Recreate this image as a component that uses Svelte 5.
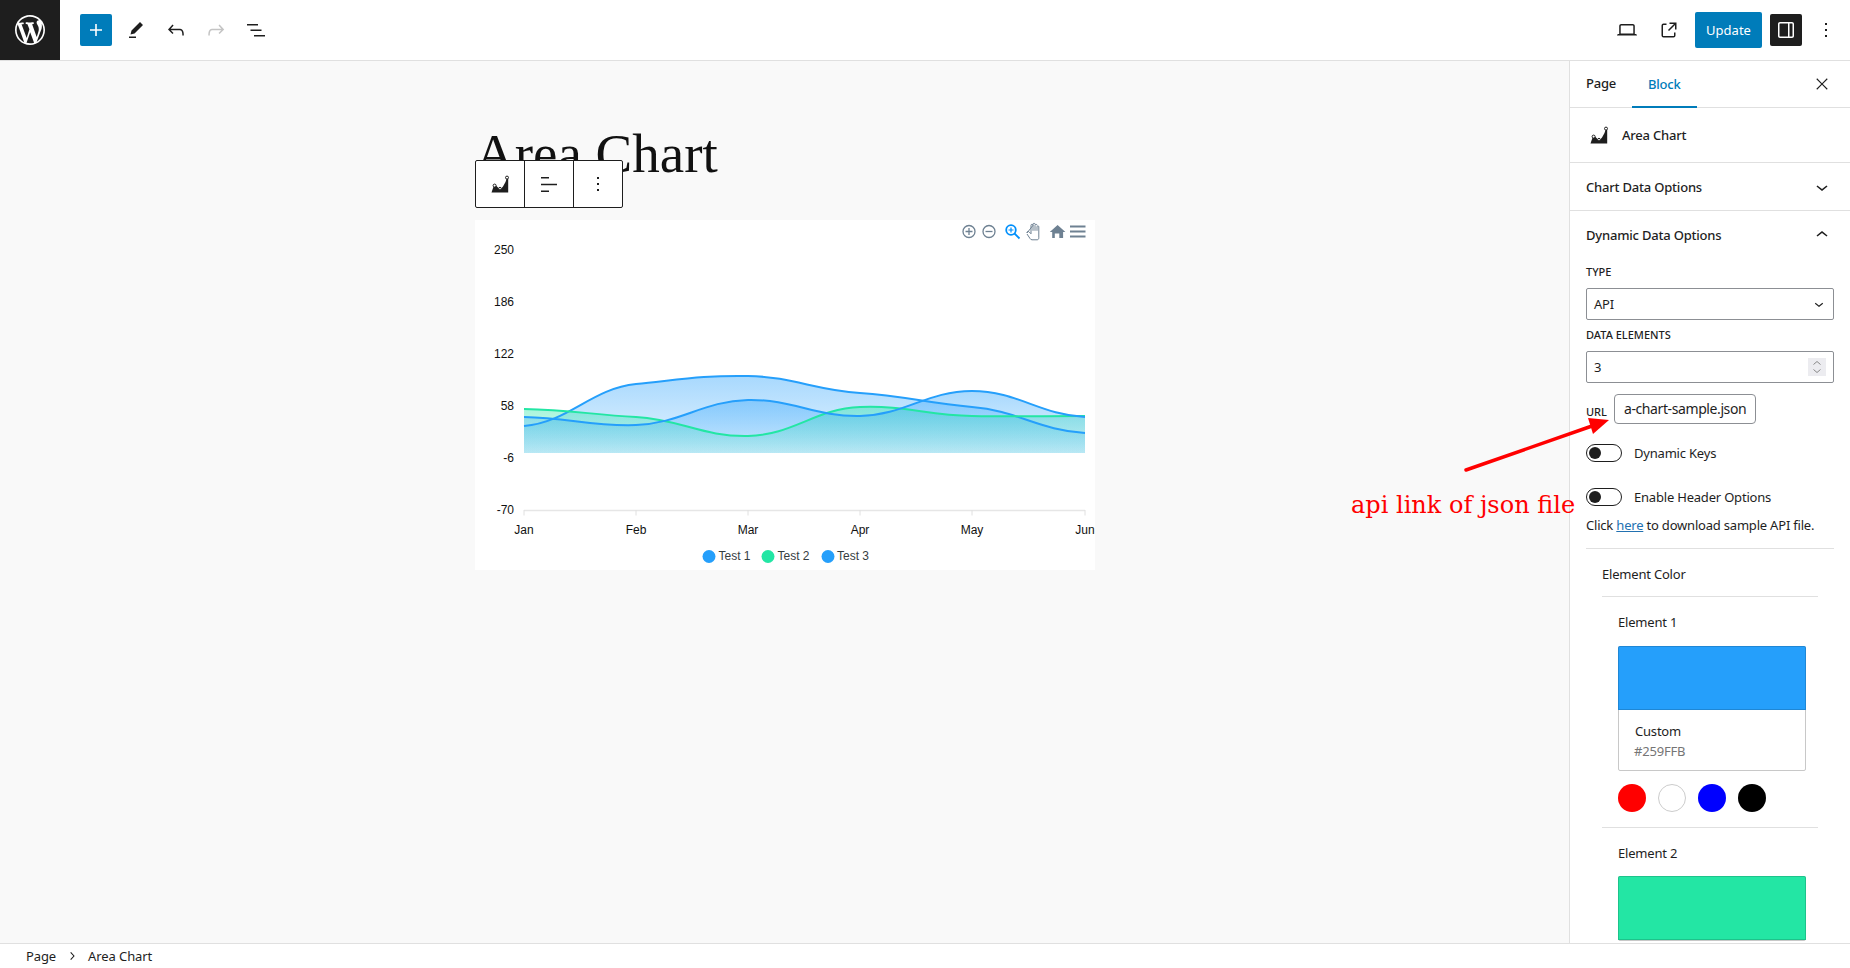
<script>
  const ticks = [524, 636, 748, 860, 972, 1085];
  const months = ['Jan', 'Feb', 'Mar', 'Apr', 'May', 'Jun'];
  const yLabels = [['250', 250], ['186', 302], ['122', 354], ['58', 406], ['-6', 458], ['-70', 510]];
  const baseY = 453;

  const series = [
    { id: 's1', color: '#259FFB', ys: [426, 384, 376, 393, 407, 433] },
    { id: 's2', color: '#23E6A4', ys: [409, 417, 436, 407, 416, 416] },
    { id: 's3', color: '#259FFB', ys: [417, 425, 400, 416, 391, 417] }
  ];

  // catmull-rom through the points, close enough to the chart lib's smoothing
  function linePath(ys) {
    let d = `M${ticks[0]} ${ys[0]}`;
    for (let i = 0; i < ys.length - 1; i++) {
      const prev = ys[Math.max(i - 1, 0)];
      const next = ys[Math.min(i + 2, ys.length - 1)];
      const dx = (ticks[i + 1] - ticks[i]) * 0.4;
      const c1 = ys[i] + (ys[i + 1] - prev) * 0.09;
      const c2 = ys[i + 1] - (next - ys[i]) * 0.09;
      d += ` C${ticks[i] + dx} ${c1} ${ticks[i + 1] - dx} ${c2} ${ticks[i + 1]} ${ys[i + 1]}`;
    }
    return d;
  }
  const areaPath = (ys) => `${linePath(ys)} L1085 ${baseY} L524 ${baseY} Z`;

  const legend = [
    { label: 'Test 1', color: '#259FFB', cx: 709, tx: 718.5 },
    { label: 'Test 2', color: '#23E6A4', cx: 768, tx: 777.5 },
    { label: 'Test 3', color: '#259FFB', cx: 828, tx: 837 }
  ];
  const presets = ['#ff0000', '#ffffff', '#0000ff', '#000000'];

  const areaIcon = 'M3.5 20.5 5.2 15.5 6.5 13.5 8.5 14 11 16.5 13 16.8 15 14.5 17.5 10 18.5 7 20.2 7V20.5Z';
</script>

{#snippet areaGlyph()}
  <svg class="icon" viewBox="0 0 24 24" width="24" height="24">
    <path d={areaIcon} fill="#1e1e1e" />
    <circle cx="6.6" cy="13.6" r="1.5" fill="#fff" stroke="#1e1e1e" />
    <circle cx="12" cy="16.6" r="1.3" fill="#fff" stroke="#1e1e1e" />
    <circle cx="19" cy="5.6" r="1.5" fill="#fff" stroke="#1e1e1e" />
  </svg>
{/snippet}

{#snippet chevron(d)}
  <svg class="icon" viewBox="0 0 24 24" width="24" height="24"><path {d} /></svg>
{/snippet}

<div class="app">
  <header class="topbar">
    <a class="wp-logo" href="#top" aria-label="WordPress">
      <svg viewBox="0 0 20 20" width="30" height="30" fill="#fff">
        <path d="M20 10c0-5.51-4.49-10-10-10C4.48 0 0 4.49 0 10c0 5.52 4.48 10 10 10 5.51 0 10-4.48 10-10zM7.78 15.37L4.37 6.22c.55-.02 1.17-.08 1.17-.08.5-.06.44-1.13-.06-1.11 0 0-1.45.11-2.37.11-.18 0-.37 0-.58-.01C4.12 2.69 6.87 1.11 10 1.11c2.33 0 4.45.87 6.05 2.34-.68-.11-1.65.39-1.65 1.58 0 .74.45 1.36.9 2.1.35.61.55 1.36.55 2.46 0 1.49-1.4 5-1.4 5l-3.03-8.37c.54-.02.82-.17.82-.17.5-.05.44-1.25-.06-1.22 0 0-1.44.12-2.38.12-.87 0-2.33-.12-2.33-.12-.5-.03-.56 1.2-.06 1.22l.92.08 1.26 3.41zM17.41 10c.24-.64.74-1.87.43-4.25.7 1.29 1.05 2.71 1.05 4.25 0 3.29-1.73 6.24-4.4 7.78.97-2.59 1.94-5.2 2.92-7.78zM6.1 18.09C3.12 16.65 1.11 13.53 1.11 10c0-1.3.23-2.48.72-3.59C3.25 10.3 4.67 14.2 6.1 18.09zm4.03-6.63l2.58 6.98c-.86.29-1.76.45-2.71.45-.79 0-1.57-.11-2.29-.33.81-2.38 1.62-4.74 2.42-7.1z" />
      </svg>
    </a>
    <div class="tools-left">
      <button class="tool primary" aria-label="Add block">
        <svg class="icon white" viewBox="0 0 24 24" width="24" height="24"><path d="M18 11.2h-5.2V6h-1.6v5.2H6v1.6h5.2V18h1.6v-5.2H18z" /></svg>
      </button>
      <button class="tool" aria-label="Tools">
        <svg class="icon" viewBox="0 0 24 24" width="24" height="24"><path d="m19 7-3-3-8.5 8.5-1 4 4-1L19 7Zm-7 11.5H5V20h7v-1.5Z" /></svg>
      </button>
      <button class="tool" aria-label="Undo">
        <svg class="icon" viewBox="0 0 24 24" width="24" height="24"><path d="M18.3 11.7c-.6-.6-1.4-.9-2.3-.9H6.7l2.9-3.3-1.1-1-4.5 5L8.5 16l1-1-2.7-2.7H16c.5 0 .9.2 1.3.5 1 1 1 3.4 1 4.5v.3h1.5v-.2c0-1.5 0-4.3-1.5-5.7z" /></svg>
      </button>
      <button class="tool" aria-label="Redo">
        <svg class="icon muted" viewBox="0 0 24 24" width="24" height="24"><path d="M15.6 6.5l-1.1 1 2.9 3.3H8c-.9 0-1.7.3-2.3.9-1.4 1.5-1.4 4.2-1.4 5.6v.2h1.5v-.3c0-1.1 0-3.5 1-4.5.3-.3.7-.5 1.3-.5h9.2L14.5 15l1.1 1.1 4.6-4.6-4.6-5z" /></svg>
      </button>
      <button class="tool" aria-label="List view">
        <svg class="icon" viewBox="0 0 24 24" width="24" height="24"><path d="M3 6h11v1.5H3V6Zm3.5 5.5h11V13h-11v-1.5ZM21 17H10v1.5h11V17Z" /></svg>
      </button>
    </div>
    <div class="tools-right">
      <button class="tool" aria-label="View">
        <svg class="icon" viewBox="0 0 24 24" width="24" height="24"><path d="M20.5 16h-.7V8c0-1.1-.9-2-2-2H6.2c-1.1 0-2 .9-2 2v8h-.7c-.8 0-1.5.7-1.5 1.5h20c0-.8-.7-1.5-1.5-1.5zM5.7 8c0-.3.2-.5.5-.5h11.6c.3 0 .5.2.5.5v7.6H5.7V8z" /></svg>
      </button>
      <button class="tool" aria-label="View page">
        <svg class="icon" viewBox="0 0 24 24" width="24" height="24"><path d="M19.5 4.5h-7V6h4.44l-5.97 5.97 1.06 1.06L18 7.06v4.44h1.5v-7Zm-13 1a2 2 0 0 0-2 2v10a2 2 0 0 0 2 2h10a2 2 0 0 0 2-2v-3H17v3a.5.5 0 0 1-.5.5h-10a.5.5 0 0 1-.5-.5v-10a.5.5 0 0 1 .5-.5h3V5.5h-3Z" /></svg>
      </button>
      <button class="update">Update</button>
      <button class="tool dark" aria-label="Settings">
        <svg class="icon white" viewBox="0 0 24 24" width="24" height="24"><path d="M18 4H6c-1.1 0-2 .9-2 2v12c0 1.1.9 2 2 2h12c1.1 0 2-.9 2-2V6c0-1.1-.9-2-2-2zm-4 14.5H6c-.3 0-.5-.2-.5-.5V6c0-.3.2-.5.5-.5h8v13zm4.5-.5c0 .3-.2.5-.5.5h-2.5v-13H18c.3 0 .5.2.5.5v12z" /></svg>
      </button>
      <button class="tool narrow" aria-label="Options">
        <svg class="icon" viewBox="0 0 24 24" width="24" height="24"><path d="M13 19h-2v-2h2v2zm0-6h-2v-2h2v2zm0-6h-2V5h2v2z" /></svg>
      </button>
    </div>
  </header>

  <div class="workspace">
    <main class="canvas">
      <h1 class="post-title">Area Chart</h1>

      <div class="block-toolbar">
        <button class="tb-cell" aria-label="Area Chart">{@render areaGlyph()}</button>
        <button class="tb-cell" aria-label="Align">
          <svg class="icon" viewBox="0 0 24 24" width="24" height="24"><path d="M4 5h8v1.500H4V5Zm0 6.700h16v1.500H4v-1.500Zm0 6.800h8V20H4v-1.500Z" /></svg>
        </button>
        <button class="tb-cell" aria-label="Options">
          <svg class="icon" viewBox="0 0 24 24" width="24" height="24"><path d="M13 19h-2v-2h2v2zm0-6h-2v-2h2v2zm0-6h-2V5h2v2z" /></svg>
        </button>
      </div>

      <div class="chart">
        <svg viewBox="475 220 620 350" width="620" height="350">
          <defs>
            {#each series as s}
              <linearGradient id={s.id} x1="0" y1="0" x2="0" y2="1">
                <stop offset="0" stop-color={s.color} stop-opacity="0.4" />
                <stop offset="1" stop-color={s.color} stop-opacity="0.12" />
              </linearGradient>
            {/each}
          </defs>

          {#each yLabels as [label, y]}
            <text class="axis" x="514" y={y + 4} text-anchor="end">{label}</text>
          {/each}

          <path d="M524 510.5H1085" stroke="#e6e6e6" stroke-width="1.5" fill="none" />
          {#each ticks as x, i}
            <path d="M{x} 510V515.5" stroke="#e0e0e0" fill="none" />
            <text class="axis" {x} y="534" text-anchor="middle">{months[i]}</text>
          {/each}

          {#each series as s}
            <path d={areaPath(s.ys)} fill="url(#{s.id})" />
          {/each}
          {#each series as s}
            <path d={linePath(s.ys)} fill="none" stroke={s.color} stroke-width="2" />
          {/each}

          {#each legend as l}
            <circle cx={l.cx} cy="556.5" r="6.5" fill={l.color} />
            <text class="legend" x={l.tx} y="560">{l.label}</text>
          {/each}

          <g class="zoom-tools" fill="none" stroke="#6e8192" stroke-width="1.3">
            <circle cx="969" cy="231.5" r="6" />
            <path d="M969 228v7M965.5 231.5h7" />
            <circle cx="989" cy="231.5" r="6" />
            <path d="M985.5 231.5h7" />
            <g stroke="#008ffb" stroke-width="1.8">
              <circle cx="1011" cy="230" r="4.8" />
              <path d="M1014.5 233.5l5 5" />
              <path d="M1011 227.5v5M1008.5 230h5" stroke-width="1.2" />
            </g>
            <path d="M1027 234l3 4.500c.6.8 1 1.300 2 1.300h5c1.200 0 1.800-.8 1.800-2v-11c0-1.300-1.800-1.300-1.800 0v4m0-5.500c0-1.400-2-1.400-2 0v5.500m0-6.500c0-1.400-2-1.400-2 0v6.500m0-5.500c0-1.400-2-1.400-2 0v8.500l-2-2c-1-1-2.500 0-2 1.200Z" stroke-width="1" />
            <path d="M1054.8 238v-4.500h4.500v4.500h3.800v-6h2.300l-7.800-7-7.800 7h2.400v6z" fill="#6e8192" stroke="none" />
            <path d="M1070 226.500h15.500M1070 231.500h15.500M1070 236.500h15.500" stroke-width="2" />
          </g>
        </svg>
      </div>
    </main>

    <aside class="sidebar">
      <div class="tabs">
        <span class="tab">Page</span>
        <span class="tab active">Block</span>
        <button class="close" aria-label="Close">
          <svg class="icon" viewBox="0 0 24 24" width="18" height="18"><path d="m13.06 12 6.47-6.47-1.06-1.06L12 10.94 5.53 4.47 4.47 5.53 10.94 12l-6.47 6.47 1.06 1.06L12 13.06l6.47 6.47 1.06-1.06L13.06 12Z" /></svg>
        </button>
      </div>

      <div class="block-card">
        {@render areaGlyph()}
        <span>Area Chart</span>
      </div>

      <div class="panel-head">
        <span>Chart Data Options</span>
        {@render chevron('M17.500 11.600L12 16l-5.500-4.400.9-1.200L12 14l4.500-3.600 1 1.200z')}
      </div>

      <div class="panel">
        <div class="panel-head open">
          <span>Dynamic Data Options</span>
          {@render chevron('M6.500 12.400L12 8l5.500 4.400-.9 1.200L12 10l-4.500 3.600-1-1.200z')}
        </div>

        <div class="field-label first">TYPE</div>
        <div class="control">
          <span>API</span>
          <svg class="select-arrow" viewBox="0 0 24 24" width="18" height="18"><path d="M17.500 11.600L12 16l-5.500-4.400.9-1.200L12 14l4.500-3.600 1 1.200z" /></svg>
        </div>

        <div class="field-label">DATA ELEMENTS</div>
        <div class="control">
          <span>3</span>
          <div class="spin">
            <svg viewBox="0 0 18 18" width="18" height="18" fill="none" stroke="#888" stroke-width="1"><path d="M5.500 6.500 9 3.500l3.500 3M5.500 11.500l3.500 3 3.500-3" /></svg>
          </div>
        </div>

        <div class="url-row">
          <span class="url-label">URL</span>
          <div class="url-input">a-chart-sample.json</div>
        </div>

        <div class="toggle-row">
          <span class="toggle"><span class="knob"></span></span>
          <span>Dynamic Keys</span>
        </div>
        <div class="toggle-row second">
          <span class="toggle"><span class="knob"></span></span>
          <span>Enable Header Options</span>
        </div>

        <p class="hint">Click <a href="#top">here</a> to download sample API file.</p>

        <div class="colors">
          <div class="colors-title">Element Color</div>
          <div class="element">
            <div class="element-name">Element 1</div>
            <div class="swatch-card">
              <div class="swatch" style="background: #259FFB"></div>
              <div class="swatch-info">
                <div class="swatch-name">Custom</div>
                <div class="swatch-hex">#259FFB</div>
              </div>
            </div>
            <div class="presets">
              {#each presets as c}
                <span class="preset" class:blank={c === '#ffffff'} style="background: {c}"></span>
              {/each}
            </div>
          </div>
          <div class="element">
            <div class="element-name">Element 2</div>
            <div class="swatch-card">
              <div class="swatch" style="background: #23E6A4"></div>
            </div>
          </div>
        </div>
      </div>
    </aside>
  </div>

  <footer class="crumbs">
    <span>Page</span>
    <svg class="icon" viewBox="0 0 24 24" width="16" height="16"><path d="M10.600 6L9.400 7l4.600 5-4.600 5 1.200 1 5.400-6z" /></svg>
    <span>Area Chart</span>
  </footer>

  <!-- screenshot annotation drawn on top of the editor -->
  <svg class="arrow" viewBox="0 0 160 60" width="160" height="60">
    <path d="M6 55 L132 11" stroke="#ff0000" stroke-width="3.500" stroke-linecap="round" fill="none" />
    <path d="M128 3 L149 5 L133 19 Z" fill="#ff0000" />
  </svg>
  <div class="note">api link of json file</div>
</div>

<style>
  :global(body) {
    margin: 0;
    background: #fff;
    color: #1e1e1e;
    font-family: 'Noto Sans', sans-serif;
    font-size: 13px;
  }

  .app {
    position: relative;
    display: flex;
    flex-direction: column;
    height: 968px;
    width: 1850px;
    overflow: hidden;
  }

  button {
    border: 0;
    background: none;
    padding: 0;
    font: inherit;
    color: inherit;
  }

  .icon { display: block; fill: #1e1e1e; flex: none; }
  .icon.white { fill: #fff; }
  .icon.muted { fill: #c4c4c4; }

  /* top bar */
  .topbar {
    display: flex;
    align-items: center;
    height: 61px;
    box-sizing: border-box;
    flex: none;
    border-bottom: 1px solid #e0e0e0;
    background: #fff;
  }
  .wp-logo {
    width: 60px;
    height: 60px;
    background: #1e1e1e;
    display: flex;
    align-items: center;
    justify-content: center;
  }
  .tools-left {
    display: flex;
    align-items: center;
    gap: 8px;
    margin-left: 20px;
  }
  .tools-right {
    display: flex;
    align-items: center;
    margin-left: auto;
    padding-right: 8px;
  }
  .tool {
    width: 32px;
    height: 32px;
    border-radius: 2px;
    display: flex;
    align-items: center;
    justify-content: center;
  }
  .tools-right .tool { margin-left: 10px; }
  .tools-right .tool:first-child { margin-left: 0; }
  .tool.primary { background: #007cba; }
  .tools-right .tool.dark { background: #1e1e1e; margin-left: 8px; }
  .tools-right .tool.narrow { margin-left: 8px; }
  .update {
    width: 67px;
    height: 36px;
    margin-left: 10px;
    background: #007cba;
    color: #fff;
    border-radius: 2px;
    font-size: 13px;
  }

  /* editor area */
  .workspace {
    flex: 1;
    display: flex;
    min-height: 0;
  }
  .canvas {
    position: relative;
    flex: 1;
    background: #f9f9f9;
    padding: 61px 0 0 475px;
  }
  .post-title {
    margin: 0;
    height: 98px;
    font-family: 'Liberation Serif', serif;
    font-weight: 400;
    font-size: 55px;
    line-height: 64px;
    color: #111;
  }
  .block-toolbar {
    position: absolute;
    left: 475px;
    top: 99px;
    display: flex;
    height: 48px;
    background: #fff;
    border: 1px solid #1e1e1e;
    border-radius: 2px;
    box-sizing: border-box;
  }
  .tb-cell {
    width: 49px;
    display: flex;
    align-items: center;
    justify-content: center;
    border-right: 1px solid #1e1e1e;
  }
  .tb-cell:last-child { border-right: 0; width: 48px; }
  .chart {
    width: 620px;
    height: 350px;
    background: #fff;
    overflow: hidden;
  }
  .chart svg { display: block; }
  .axis {
    font-family: 'Liberation Sans', sans-serif;
    font-size: 12px;
    fill: #111;
  }
  .legend {
    font-family: 'Liberation Sans', sans-serif;
    font-size: 12px;
    fill: #373d3f;
  }

  /* settings sidebar */
  .sidebar {
    width: 281px;
    flex: none;
    box-sizing: border-box;
    border-left: 1px solid #e0e0e0;
    background: #fff;
    overflow: hidden;
    letter-spacing: -0.2px;
  }
  .tabs {
    display: flex;
    align-items: stretch;
    height: 47px;
    box-sizing: border-box;
    border-bottom: 1px solid #e0e0e0;
    position: relative;
  }
  .tab {
    display: flex;
    align-items: center;
    padding: 0 0 2px 16px;
    font-weight: 500;
    box-sizing: border-box;
  }
  .tab:first-child { width: 62px; }
  .tab.active {
    width: 65px;
    color: #007cba;
    box-shadow: inset 0 -2px 0 #007cba;
    margin-bottom: -1px;
  }
  .close {
    margin-left: auto;
    margin-right: 19px;
    display: flex;
    align-items: center;
  }
  .block-card {
    display: flex;
    align-items: center;
    gap: 11px;
    height: 55px;
    padding: 0 0 0 17px;
    box-sizing: border-box;
    border-bottom: 1px solid #e0e0e0;
    font-weight: 500;
  }
  .panel-head {
    display: flex;
    align-items: center;
    justify-content: space-between;
    height: 48px;
    padding: 0 16px;
    box-sizing: border-box;
    border-bottom: 1px solid #e0e0e0;
    font-weight: 500;
  }
  .panel-head.open { border-bottom: 0; height: 48px; }
  .panel { padding-bottom: 16px; }
  .field-label {
    margin: 7px 16px 0;
    height: 16px;
    line-height: 16px;
    font-size: 11px;
    font-weight: 500;
    letter-spacing: 0;
  }
  .field-label.first { margin-top: 5px; }
  .control {
    margin: 8px 16px 0;
    height: 32px;
    box-sizing: border-box;
    border: 1px solid #8c8f94;
    border-radius: 2px;
    display: flex;
    align-items: center;
    justify-content: space-between;
    padding: 0 7px;
    font-size: 13px;
  }
  .select-arrow { fill: #1e1e1e; margin-right: -2px; }
  .spin {
    width: 18px;
    height: 18px;
    background: #ececf0;
  }
  .spin svg { display: block; }
  .url-row {
    display: flex;
    align-items: center;
    margin: 11px 16px 0;
    gap: 7px;
  }
  .url-label {
    font-size: 11px;
    font-weight: 500;
    padding-top: 4px;
    letter-spacing: 0;
  }
  .url-input {
    width: 142px;
    height: 30px;
    box-sizing: border-box;
    border: 1px solid #8c8f94;
    border-radius: 4px;
    padding: 0 9px;
    line-height: 27px;
    font-size: 14px;
    letter-spacing: -0.4px;
    white-space: nowrap;
    overflow: hidden;
  }
  .toggle-row {
    display: flex;
    align-items: center;
    gap: 12px;
    margin: 20px 16px 0;
    height: 18px;
  }
  .toggle-row.second { margin-top: 26px; }
  .toggle {
    width: 36px;
    height: 18px;
    box-sizing: border-box;
    border: 1px solid #1e1e1e;
    border-radius: 9px;
    padding: 2px;
    flex: none;
  }
  .knob {
    display: block;
    width: 12px;
    height: 12px;
    border-radius: 50%;
    background: #1e1e1e;
  }
  .hint {
    margin: 9px 16px 0;
    padding-bottom: 13px;
    height: 20px;
    line-height: 20px;
    border-bottom: 1px solid #e0e0e0;
  }
  .hint a { color: #2271b1; }
  .colors { padding: 0 32px; }
  .colors-title {
    height: 47px;
    line-height: 51px;
    border-bottom: 1px solid #e0e0e0;
  }
  .element {
    padding: 16px 12px 15px 16px;
    border-bottom: 1px solid #e0e0e0;
  }
  .element-name { height: 18px; line-height: 18px; margin-top: 0; }
  .swatch-card {
    margin-top: 15px;
    width: 188px;
    box-sizing: border-box;
    border: 1px solid #c8c8c8;
    border-radius: 2px;
  }
  .element + .element .swatch-card { margin-top: 14px; }
  .swatch { height: 64px; margin: -1px -1px 0; border-radius: 2px 2px 0 0; box-shadow: inset 0 0 0 1px rgba(0,0,0,.15); }
  .swatch-info { padding: 11px 16px 8px; height: 60px; box-sizing: border-box; }
  .swatch-name { line-height: 20px; }
  .swatch-hex { line-height: 20px; color: #757575; margin-left: -1px; }
  .presets {
    display: flex;
    gap: 12px;
    margin-top: 13px;
  }
  .preset {
    width: 28px;
    height: 28px;
    border-radius: 50%;
    box-sizing: border-box;
  }
  .preset.blank { border: 1px solid #ccc; }

  /* breadcrumb */
  .crumbs {
    position: relative;
    z-index: 1;
    flex: none;
    height: 25px;
    box-sizing: border-box;
    border-top: 1px solid #e0e0e0;
    background: #fff;
    display: flex;
    align-items: center;
    gap: 8px;
    padding-left: 26px;
    letter-spacing: -0.1px;
  }

  /* annotation */
  .arrow {
    position: absolute;
    left: 1460px;
    top: 415px;
  }
  .note {
    position: absolute;
    left: 1351px;
    top: 491px;
    font-family: 'DejaVu Serif', serif;
    font-size: 24px;
    line-height: 28px;
    color: #ff0000;
    white-space: nowrap;
  }
</style>
